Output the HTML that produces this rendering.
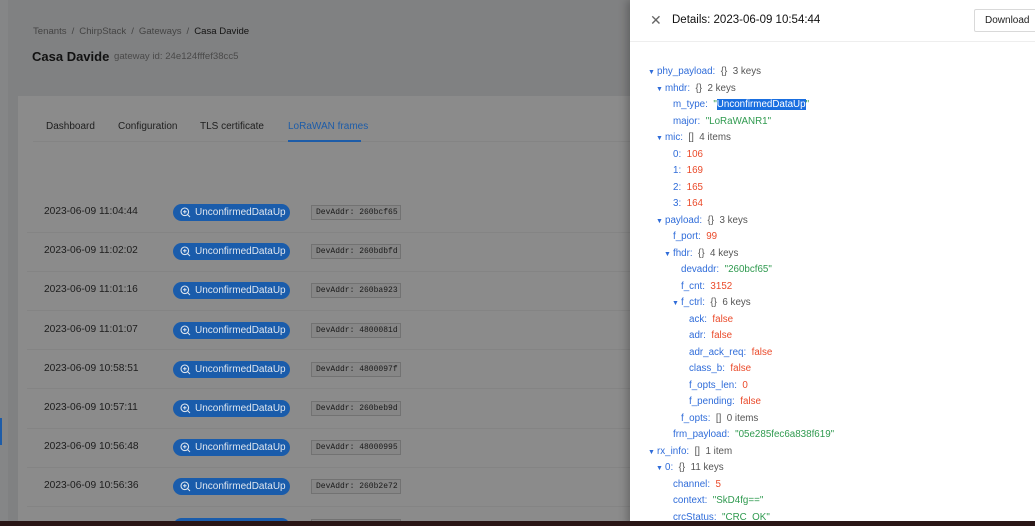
<!DOCTYPE html>
<html><head><meta charset="utf-8"><style>
*{margin:0;padding:0;box-sizing:border-box}
html,body{width:1035px;height:526px;overflow:hidden}
body{background:#808182;font-family:"Liberation Sans",sans-serif;position:relative}
.abs{position:absolute;white-space:nowrap}
.crumb{left:33px;top:26px;font-size:9.6px;color:#444}
.crumb i{font-style:normal;margin:0 5px}
.crumb b{font-weight:normal;color:#141414}
.title{left:32px;top:49px;font-size:13px;font-weight:bold;color:#111}
.gid{left:114px;top:51px;font-size:9.6px;color:#4a4a4a}
.card{left:18px;top:96px;width:620px;height:425px;background:#8b8b8b}
.side{left:0;top:0;width:8px;height:526px;background:#858687}
.tab{top:121px;font-size:10px;color:#1e1e1e}
.tabline{left:33px;top:141px;width:600px;height:1px;background:#848484}
.ul{left:288px;top:140px;width:73px;height:2px;background:#1d5ca8}
.date{left:44px;font-size:10.2px;color:#1c1c1c}
.badge{left:173px;width:117px;height:17px;border-radius:9px;background:#1a5cab;color:#dfe6ef;font-size:10px;line-height:17px;padding-left:22px}
.badge svg{position:absolute;left:7px;top:3px}
.dev{left:311px;width:90px;height:15px;border:1px solid #727272;background:#868686;font-family:"Liberation Mono",monospace;font-size:8px;line-height:13px;padding-left:4px;color:#1a1a1a}
.sep{left:27px;width:603px;height:1px;background:#848484}
.panel{left:630px;top:0;width:405px;height:526px;background:#fff;box-shadow:-3px 0 8px rgba(0,0,0,.25)}
.ph{left:630px;top:0;width:405px;height:42px;border-bottom:1px solid #eee}
.dl{left:974px;top:9px;width:65px;height:23px;border:1px solid #d9d9d9;border-radius:2px;font-size:10px;line-height:21px;padding-left:10px;color:#222;background:#fff}
.j{font-size:9.8px;line-height:16.5px;color:#555}
.k{color:#2f6cd9}.s{color:#2f9a4f}.n{color:#ea4a2a}
.ar{position:absolute;font-size:7px;color:#2f6cd9}
.bot{left:0;top:521px;width:1035px;height:5px;background:#2a1616}
</style></head><body>
<div class="abs side"></div>
<div class="abs crumb">Tenants<i>/</i>ChirpStack<i>/</i>Gateways<i>/</i><b>Casa Davide</b></div>
<div class="abs title">Casa Davide</div>
<div class="abs gid">gateway id: 24e124fffef38cc5</div>
<div class="abs card"></div>
<div class="abs tab" style="left:46px">Dashboard</div>
<div class="abs tab" style="left:118px">Configuration</div>
<div class="abs tab" style="left:200px">TLS certificate</div>
<div class="abs tab" style="left:288px;color:#1d5ca8">LoRaWAN frames</div>
<div class="abs tabline"></div><div class="abs ul"></div>
<div class="abs" style="left:0;top:418px;width:2px;height:27px;background:#1d5ca8"></div>
<div id="rows"></div>
<div class="abs panel"></div>
<div class="abs ph"></div>
<div class="abs" style="left:650px;top:12px;font-size:14px;color:#666">✕</div>
<div class="abs" style="left:672px;top:14px;font-size:11.5px;color:#111">Details: 2023-06-09 10:54:44</div>
<div class="abs dl">Download</div>
<div id="json"></div>
<div class="abs bot"></div>
<script>
var rows=[["2023-06-09 11:04:44","260bcf65"],["2023-06-09 11:02:02","260bdbfd"],["2023-06-09 11:01:16","260ba923"],["2023-06-09 11:01:07","4800081d"],["2023-06-09 10:58:51","4800097f"],["2023-06-09 10:57:11","260beb9d"],["2023-06-09 10:56:48","48000995"],["2023-06-09 10:56:36","260b2e72"],["2023-06-09 10:56:28","260b6886"]];
var h="";
rows.forEach(function(r,i){var c=212+i*39.2;
h+='<div class="abs date" style="top:'+(c-6)+'px">'+r[0]+'</div>';
h+='<div class="abs badge" style="top:'+(c-8)+'px"><svg width="11" height="11" viewBox="0 0 11 11"><circle cx="4.8" cy="4.8" r="3.8" fill="none" stroke="#dfe6ef" stroke-width="1.1"/><path d="M7.5 7.5L10 10M3 4.8h3.6M4.8 3v3.6" stroke="#dfe6ef" stroke-width="1"/></svg>UnconfirmedDataUp</div>';
h+='<div class="abs dev" style="top:'+(c-7)+'px">DevAddr: '+r[1]+'</div>';
h+='<div class="abs sep" style="top:'+(c+19.5)+'px"></div>';});
document.getElementById('rows').innerHTML=h;
var J=[[0,1,'phy_payload','<span>{}</span>&nbsp; 3 keys'],[1,1,'mhdr','{}&nbsp; 2 keys'],[2,0,'m_type','<span class="s">"<span style="background:#1a6fe0;color:#fff">UnconfirmedDataUp</span>"</span>'],[2,0,'major','<span class="s">"LoRaWANR1"</span>'],[1,1,'mic','[]&nbsp; 4 items'],[2,0,'0','<span class="n">106</span>'],[2,0,'1','<span class="n">169</span>'],[2,0,'2','<span class="n">165</span>'],[2,0,'3','<span class="n">164</span>'],[1,1,'payload','{}&nbsp; 3 keys'],[2,0,'f_port','<span class="n">99</span>'],[2,1,'fhdr','{}&nbsp; 4 keys'],[3,0,'devaddr','<span class="s">"260bcf65"</span>'],[3,0,'f_cnt','<span class="n">3152</span>'],[3,1,'f_ctrl','{}&nbsp; 6 keys'],[4,0,'ack','<span class="n">false</span>'],[4,0,'adr','<span class="n">false</span>'],[4,0,'adr_ack_req','<span class="n">false</span>'],[4,0,'class_b','<span class="n">false</span>'],[4,0,'f_opts_len','<span class="n">0</span>'],[4,0,'f_pending','<span class="n">false</span>'],[3,0,'f_opts','[]&nbsp; 0 items'],[2,0,'frm_payload','<span class="s">"05e285fec6a838f619"</span>'],[0,1,'rx_info','[]&nbsp; 1 item'],[1,1,'0','{}&nbsp; 11 keys'],[2,0,'channel','<span class="n">5</span>'],[2,0,'context','<span class="s">"SkD4fg=="</span>'],[2,0,'crcStatus','<span class="s">"CRC_OK"</span>']];
h="";
J.forEach(function(e,i){var y=64+i*16.5,x=657+8*e[0];
if(e[1])h+='<div class="ar" style="left:'+(x-9)+'px;top:'+(y+5)+'px">▼</div>';
h+='<div class="abs j" style="left:'+x+'px;top:'+y+'px"><span class="k">'+e[2]+':</span>&nbsp; '+e[3]+'</div>';});
document.getElementById('json').innerHTML=h;
</script>
</body></html>
